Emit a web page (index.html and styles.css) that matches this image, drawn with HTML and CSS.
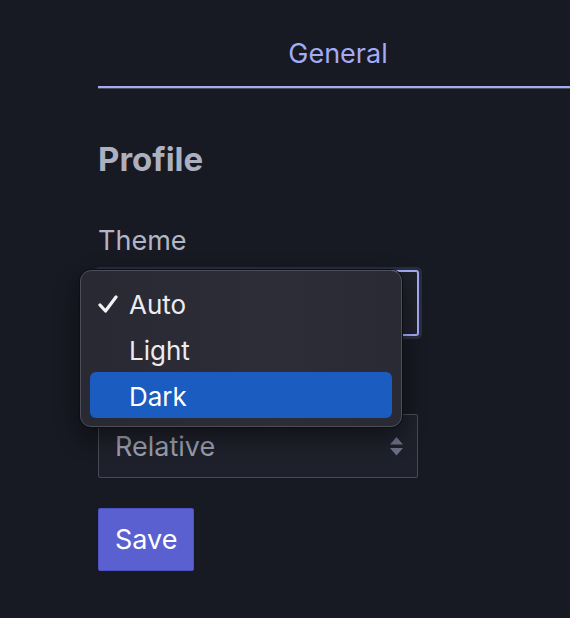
FILE: index.html
```html
<!DOCTYPE html>
<html lang="en">
<head>
<meta charset="utf-8">
<title>Settings</title>
<link rel="stylesheet" href="styles.css">
</head>
<body>
<div class="page">
  <nav class="tabs">
    <div class="tab active">General</div>
  </nav>

  <h2 class="heading">Profile</h2>

  <div class="field field-theme">
    <div class="label">Theme</div>
    <div class="select focused">
      <span class="value">Auto</span>
      <svg class="arrows" width="13" height="19" viewBox="0 0 13 19"><path d="M6.5 0 L13 7.5 H0 Z M0 11 H13 L6.5 18.5 Z" fill="#6b7088"/></svg>
    </div>
    <div class="menu">
      <div class="option"><svg class="check" width="20" height="20" viewBox="0 0 20 20"><path d="M2 11 L7.5 17 L18 3" fill="none" stroke="#f2f2f4" stroke-width="3.2" stroke-linecap="round" stroke-linejoin="round"/></svg>Auto</div>
      <div class="option">Light</div>
      <div class="option selected">Dark</div>
    </div>
  </div>

  <div class="field field-time">
    <div class="select">
      <span class="value">Relative</span>
      <svg class="arrows" width="13" height="19" viewBox="0 0 13 19"><path d="M6.5 0 L13 7.5 H0 Z M0 11 H13 L6.5 18.5 Z" fill="#6b7088"/></svg>
    </div>
  </div>

  <button class="save">Save</button>
</div>
</body>
</html>
```

FILE: styles.css
```css
html, body {
  margin: 0;
  padding: 0;
  background: #171923;
  overflow: hidden;
}
body {
  font-family: Inter, "Noto Sans", sans-serif;
  width: 570px;
  height: 618px;
}
.page {
  padding-left: 98px;
}
.tabs {
  display: flex;
  width: 480px;
  border-bottom: 1px solid #4a4b57;
}
.tab {
  width: 480px;
  flex: none;
  text-align: center;
  font-size: 27px;
  line-height: 40px;
  padding: 34px 0 12px;
  color: #a3abf5;
  border-bottom: 2px solid transparent;
}
.tab.active {
  border-bottom-color: #a3abf5;
}
.heading {
  margin: 50px 0 42px;
  font-size: 33px;
  line-height: 40px;
  font-weight: 700;
  color: #acb0bf;
}
.field {
  position: relative;
  width: 320px;
}
.field-time {
  margin-top: 79px;
}
.label {
  font-size: 27px;
  line-height: 40px;
  color: #b2b6c4;
  margin-bottom: 10px;
}
.select {
  display: flex;
  align-items: center;
  justify-content: space-between;
  box-sizing: border-box;
  width: 320px;
  height: 64px;
  padding: 12px 14px 10px 16px;
  border: 1px solid #474a55;
  border-radius: 2px;
  background: #1e202b;
}
.select.focused {
  border-color: #a3abf5;
  box-shadow: 0 0 0 1px #a3abf5, 0 0 0 4px #2a2d40;
}
.value {
  font-size: 27px;
  line-height: 40px;
  color: #9a9eae;
}
.arrows {
  margin-top: -2px;
}
.menu {
  position: absolute;
  z-index: 10;
  left: -18px;
  top: 49px;
  width: 322px;
  box-sizing: border-box;
  padding: 9px 9px 8px;
  background: linear-gradient(90deg, #282932 0%, #2c2d36 60%, #292a33 100%);
  border: 1px solid #4d4e57;
  border-radius: 11px;
  box-shadow: 0 0 0 1px #0e0f14, 0 10px 24px rgba(0, 0, 0, 0.45);
}
.option {
  position: relative;
  height: 44px;
  padding-top: 2px;
  line-height: 46px;
  padding-left: 39px;
  font-size: 26px;
  color: #ececef;
  border-radius: 6px;
}
.option.selected {
  background: #1b5cc0;
  color: #ffffff;
}
.check {
  position: absolute;
  left: 8px;
  top: 14px;
}
.save {
  display: block;
  margin: 30px 0 0;
  padding: 11px 16px;
  font-family: inherit;
  font-size: 27px;
  line-height: 39px;
  color: #ffffff;
  background: #5a60cf;
  border: 1px solid #4d52c0;
  border-radius: 2px;
}
```
